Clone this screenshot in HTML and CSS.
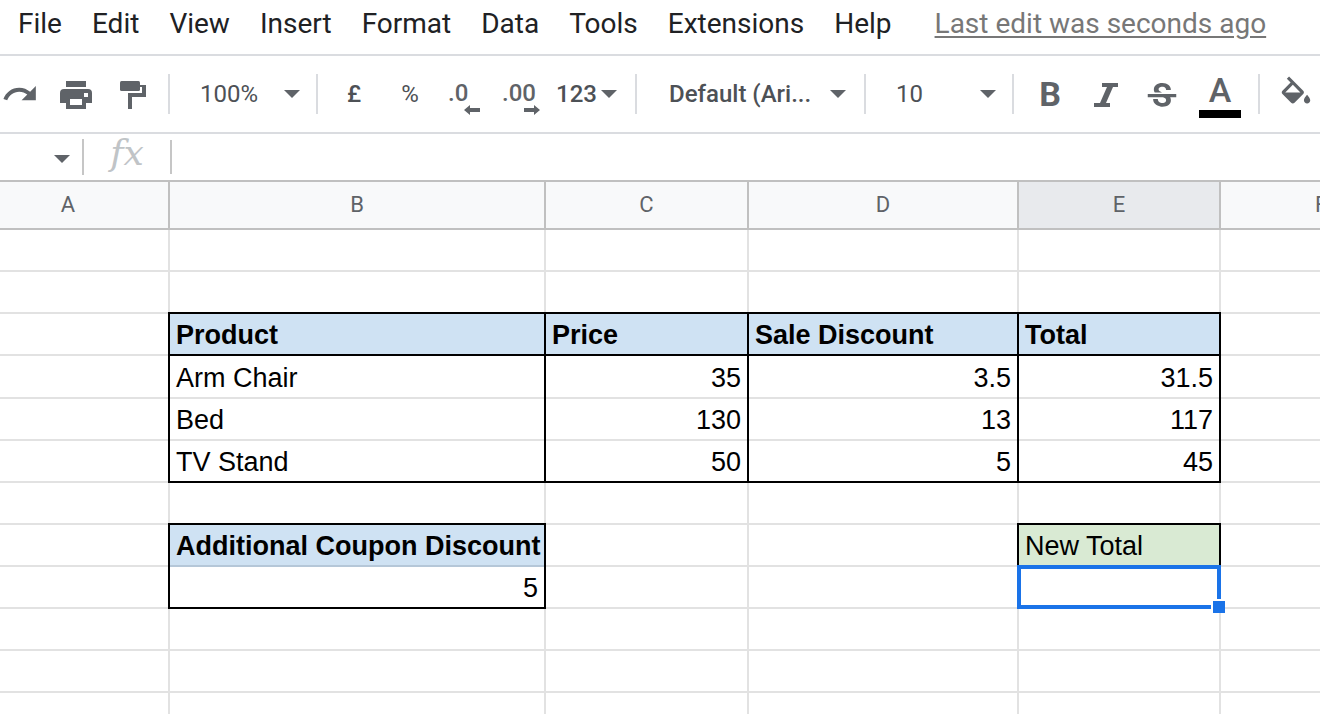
FILE: index.html
```html
<!DOCTYPE html>
<html lang="en">
  <head>
    <meta charset="UTF-8" />
    <meta name="viewport" content="width=device-width, initial-scale=1.0" />
    <title>Spreadsheet</title>
    <link rel="stylesheet" href="styles.css">
  </head>
  <body>
    <nav class="menu-bar">
      <button type="button">File</button>
      <button type="button">Edit</button>
      <button type="button">View</button>
      <button type="button">Insert</button>
      <button type="button">Format</button>
      <button type="button">Data</button>
      <button type="button">Tools</button>
      <button type="button">Extensions</button>
      <button type="button">Help</button>
      <a href="#" class="last-edit">Last edit was seconds ago</a>
    </nav>

    <div class="toolbar">
      <button type="button" class="tool" aria-label="Redo">
        <svg class="icon" viewBox="0 0 24 24"><path d="M18.4 10.6C16.55 8.99 14.15 8 11.5 8c-4.65 0-8.58 3.03-9.96 7.22L3.9 16c1.05-3.19 4.05-5.5 7.6-5.5 1.95 0 3.73.72 5.12 1.88L13 16h9V7l-3.6 3.6z" /></svg>
      </button>
      <button type="button" class="tool" aria-label="Print">
        <svg class="icon-lg" viewBox="0 0 36 36"><path fill-rule="evenodd" d="M8 5h20v6H8zM6 13h24a4 4 0 0 1 4 4v10h-6v6H8v-6H2V17a4 4 0 0 1 4-4zM12 23v6h12v-6zM26 17v4h4v-4z" /></svg>
      </button>
      <button type="button" class="tool" aria-label="Paint format">
        <svg class="icon-lg" viewBox="0 0 36 36"><rect x="6" y="5" width="20" height="10" rx="1.5" /><path d="M26 9h6v12H18v12h-4V17h14v-6h-2z" /></svg>
      </button>
      <span class="divider"></span>

      <label class="dropdown">
        <select aria-label="Zoom"><option>100%</option></select>
        <svg class="caret" viewBox="0 0 16 8"><path d="M0 0h16L8 8z" /></svg>
      </label>
      <span class="divider"></span>

      <button type="button" class="tool medium" aria-label="Format as currency">£</button>
      <button type="button" class="tool" aria-label="Format as percent">%</button>
      <button type="button" class="tool decimal decrease" aria-label="Decrease decimal places">
        <span>.0</span>
        <svg class="arrow" viewBox="0 0 16 10"><path d="M6 0v3h10v4H6v3L0 5z" /></svg>
      </button>
      <button type="button" class="tool decimal" aria-label="Increase decimal places">
        <span>.00</span>
        <svg class="arrow" viewBox="0 0 16 10"><path d="M10 0v3H0v4h10v3l6-5z" /></svg>
      </button>
      <button type="button" class="tool formats">
        <span>123</span>
        <svg class="caret" viewBox="0 0 16 8"><path d="M0 0h16L8 8z" /></svg>
      </button>
      <span class="divider"></span>

      <label class="dropdown font-name">
        <select aria-label="Font"><option>Default (Ari...</option></select>
        <svg class="caret" viewBox="0 0 16 8"><path d="M0 0h16L8 8z" /></svg>
      </label>
      <span class="divider"></span>

      <label class="dropdown">
        <select aria-label="Font size"><option>10</option></select>
        <svg class="caret" viewBox="0 0 16 8"><path d="M0 0h16L8 8z" /></svg>
      </label>
      <span class="divider"></span>

      <button type="button" class="tool bold" aria-label="Bold">B</button>
      <button type="button" class="tool" aria-label="Italic">
        <svg class="icon-lg" viewBox="0 0 36 36"><path d="M14 7h16v4h-5l-7 16h4v4H6v-4h6l7-16h-5z" /></svg>
      </button>
      <button type="button" class="tool" aria-label="Strikethrough">
        <svg class="icon" viewBox="0 -2 24 24"><path d="M7.24 8.75c-.26-.48-.39-1.03-.39-1.67 0-.61.13-1.16.4-1.67.26-.5.63-.93 1.11-1.29.48-.35 1.05-.63 1.7-.83.66-.19 1.39-.29 2.18-.29.81 0 1.54.11 2.21.34.66.22 1.23.54 1.69.94.47.4.83.88 1.08 1.43.25.55.38 1.15.38 1.81h-3.01c0-.31-.05-.59-.15-.85-.09-.27-.24-.49-.44-.68-.2-.19-.45-.33-.75-.44-.3-.1-.66-.16-1.06-.16-.39 0-.74.04-1.03.13-.29.09-.53.21-.72.36-.19.16-.34.34-.44.55-.1.21-.15.43-.15.66 0 .48.25.88.74 1.21.38.25.77.48 1.41.7H7.39c-.05-.08-.11-.17-.15-.25zM21 12v-2H3v2h9.62c.18.07.4.14.55.2.37.17.66.34.87.51.21.17.35.36.43.57.07.2.11.43.11.69 0 .23-.05.45-.14.66-.09.2-.23.38-.42.53-.19.15-.42.26-.71.35-.29.08-.63.13-1.01.13-.43 0-.83-.04-1.18-.13s-.66-.23-.91-.42c-.25-.19-.45-.44-.59-.75-.14-.31-.25-.76-.25-1.21H6.4c0 .55.08 1.13.24 1.58.16.45.37.85.65 1.21.28.35.6.66.98.92.37.26.78.48 1.22.65.44.17.9.3 1.38.39.48.08.96.13 1.44.13.8 0 1.53-.09 2.18-.28s1.21-.45 1.67-.79c.46-.34.82-.77 1.07-1.27s.38-1.07.38-1.71c0-.6-.1-1.14-.31-1.61-.05-.11-.11-.23-.17-.33H21z" /></svg>
      </button>
      <button type="button" class="tool text-color" aria-label="Text color">
        <span>A</span>
        <i class="swatch"></i>
      </button>
      <span class="divider"></span>
      <button type="button" class="tool" aria-label="Fill color">
        <svg class="icon" viewBox="0 -1 24 24"><path d="M16.56 8.94L7.62 0 6.21 1.41l2.38 2.38-5.15 5.15c-.59.59-.59 1.54 0 2.12l5.5 5.5c.29.29.68.44 1.06.44s.77-.15 1.06-.44l5.5-5.5c.59-.58.59-1.53 0-2.12zM5.21 10L10 5.21 14.79 10H5.21zM19 11.5s-2 2.17-2 3.5c0 1.1.9 2 2 2s2-.9 2-2c0-1.33-2-3.5-2-3.5z" /></svg>
      </button>
    </div>

    <div class="formula-bar">
      <button type="button" class="name-box" aria-label="Named ranges">
        <svg class="caret" viewBox="0 0 16 8"><path d="M0 0h16L8 8z" /></svg>
      </button>
      <label class="fx" for="formula">fx</label>
      <input type="text" id="formula" class="formula" />
    </div>

    <main class="sheet">
      <table>
        <colgroup>
          <col class="col-a" />
          <col class="col-b" />
          <col class="col-c" />
          <col class="col-d" />
          <col class="col-e" />
          <col class="col-f" />
          <col />
        </colgroup>
        <thead>
          <tr>
            <th class="scrolled">A</th>
            <th>B</th>
            <th>C</th>
            <th>D</th>
            <th class="active">E</th>
            <th>F</th>
            <th></th>
          </tr>
        </thead>
        <tbody>
          <tr><td></td><td></td><td></td><td></td><td></td><td></td><td></td></tr>
          <tr><td></td><td></td><td></td><td></td><td></td><td></td><td></td></tr>
          <tr>
            <td></td>
            <td class="box top head">Product</td>
            <td class="box top head">Price</td>
            <td class="box top head">Sale Discount</td>
            <td class="box top head">Total</td>
            <td></td>
            <td></td>
          </tr>
          <tr class="tall">
            <td></td>
            <td class="box top">Arm Chair</td>
            <td class="box top number">35</td>
            <td class="box top number">3.5</td>
            <td class="box top number">31.5</td>
            <td></td>
            <td></td>
          </tr>
          <tr>
            <td></td>
            <td class="box">Bed</td>
            <td class="box number">130</td>
            <td class="box number">13</td>
            <td class="box number">117</td>
            <td></td>
            <td></td>
          </tr>
          <tr>
            <td></td>
            <td class="box bottom">TV Stand</td>
            <td class="box bottom number">50</td>
            <td class="box bottom number">5</td>
            <td class="box bottom number">45</td>
            <td></td>
            <td></td>
          </tr>
          <tr><td></td><td></td><td></td><td></td><td></td><td></td><td></td></tr>
          <tr>
            <td></td>
            <td class="box top head">Additional Coupon Discount</td>
            <td></td>
            <td></td>
            <td class="box top new-total">New Total</td>
            <td></td>
            <td></td>
          </tr>
          <tr>
            <td></td>
            <td class="box bottom number">5</td>
            <td></td>
            <td></td>
            <td class="selected"><span class="handle"></span></td>
            <td></td>
            <td></td>
          </tr>
          <tr><td></td><td></td><td></td><td></td><td></td><td></td><td></td></tr>
          <tr><td></td><td></td><td></td><td></td><td></td><td></td><td></td></tr>
          <tr><td></td><td></td><td></td><td></td><td></td><td></td><td></td></tr>
        </tbody>
      </table>
    </main>
  </body>
</html>
```

FILE: styles.css
```css
* {
  margin: 0;
  padding: 0;
  box-sizing: border-box;
}

body {
  font-family: Roboto, Arial, sans-serif;
  background: #ffffff;
  color: #202124;
  height: 100vh;
  display: flex;
  flex-direction: column;
  overflow: hidden;
}

button,
select,
input {
  font: inherit;
  color: inherit;
  background: none;
  border: none;
  outline: none;
}

button,
select {
  cursor: pointer;
}

svg {
  display: block;
  fill: #5f6368;
  flex-shrink: 0;
}

/* Menu */
.menu-bar {
  display: flex;
  align-items: center;
  flex-shrink: 0;
  height: 56px;
  padding: 0 3px 8px;
  font-size: 28px;
  white-space: nowrap;
  border-bottom: 2px solid #dadce0;
}

.menu-bar button {
  padding: 0 15px;
}

.last-edit {
  margin-left: 28px;
  color: #777777;
  text-underline-offset: 3px;
}

/* Toolbar */
.toolbar {
  display: flex;
  align-items: center;
  flex-shrink: 0;
  height: 78px;
  margin-left: -8px;
  font-size: 24px;
  color: #4d5156;
  border-bottom: 2px solid #dadce0;
}

.tool {
  display: flex;
  align-items: center;
  justify-content: center;
  flex-shrink: 0;
  width: 56px;
  height: 60px;
}

.icon {
  width: 38px;
  height: 38px;
}

.icon-lg {
  width: 36px;
  height: 36px;
}

.caret {
  width: 16px;
  height: 8px;
}

.divider {
  flex-shrink: 0;
  width: 2px;
  height: 40px;
  margin: 0 8px;
  background: #dadce0;
}

.dropdown {
  display: flex;
  align-items: center;
  flex-shrink: 0;
  width: 130px;
  padding: 0 8px 0 22px;
}

.dropdown select {
  flex: 1;
  min-width: 0;
  appearance: none;
}

.font-name {
  width: 211px;
  padding: 0 10px 0 24px;
  font-weight: 500;
}

.medium {
  font-weight: 500;
}

.decimal {
  flex-direction: column;
  align-items: flex-start;
  padding: 8px 10px 0 8px;
  color: #5f6368;
  font-weight: 500;
  line-height: 24px;
}

.decrease {
  padding: 8px 14px 0 10px;
}

.arrow {
  width: 16px;
  height: 10px;
  align-self: flex-end;
}

.formats {
  width: 77px;
  gap: 4px;
  padding-right: 4px;
  font-weight: 500;
}

.bold {
  color: #5f6368;
  font-size: 34px;
  font-weight: 700;
}

.text-color {
  flex-direction: column;
  width: 60px;
  color: #5f6368;
  font-size: 34px;
  font-weight: 500;
  line-height: 40px;
}

.swatch {
  width: 42px;
  height: 8px;
  background: #000000;
}

/* Formula bar */
.formula-bar {
  display: flex;
  align-items: center;
  flex-shrink: 0;
  height: 48px;
  border-bottom: 2px solid #c0c0c0;
}

.name-box {
  display: flex;
  align-items: center;
  justify-content: flex-end;
  width: 84px;
  height: 36px;
  padding: 4px 12px 0 0;
  border-right: 2px solid #c6c6c6;
}

.fx {
  width: 88px;
  height: 34px;
  color: #c0c4c7;
  font-family: "DejaVu Serif", serif;
  font-size: 36px;
  font-style: italic;
  line-height: 26px;
  text-align: center;
  border-right: 2px solid #c6c6c6;
}

.formula {
  flex: 1;
  height: 44px;
  padding: 0 12px;
  font-size: 26px;
}

/* Grid */
.sheet {
  flex: 1;
  min-height: 0;
  overflow: hidden;
}

table {
  width: max(100%, 1500px);
  table-layout: fixed;
  border-collapse: separate;
  border-spacing: 0;
  color: #000000;
  font-family: "Liberation Sans", Arial, sans-serif;
  font-size: 27px;
}

.col-a {
  width: 170px;
}

.col-b {
  width: 376px;
}

.col-c {
  width: 203px;
}

.col-d {
  width: 270px;
}

.col-e,
.col-f {
  width: 202px;
}

th {
  height: 48px;
  padding-bottom: 2px;
  background: #f8f9fa;
  color: #5f6368;
  font-family: Roboto, Arial, sans-serif;
  font-size: 22px;
  font-weight: 400;
  border-right: 2px solid #c0c0c0;
  border-bottom: 2px solid #c0c0c0;
}

th.active {
  background: #e8eaed;
}

th.scrolled {
  padding-right: 32px;
}

td {
  --line: #e2e2e2;
  --edge: 0 0 0 transparent;
  height: 42px;
  padding: 0 6px;
  line-height: 32px;
  white-space: nowrap;
  border-right: 2px solid #e2e2e2;
  box-shadow: var(--edge), inset 0 -2px 0 var(--line);
}

.tall td {
  height: 43px;
}

/* Black frame: the left and top edges are drawn over the neighbouring cells */
.box {
  --edge: -2px 0 0 #000000;
  border-right-color: #000000;
}

.box.top {
  --edge: -2px 0 0 #000000, 0 -2px 0 #000000, -2px -2px 0 #000000;
}

.box.bottom {
  --line: #000000;
}

.head {
  --line: #b5c7d8;
  background: #cfe2f3;
  font-weight: 700;
}

.new-total {
  background: #d9ead3;
}

.number {
  text-align: right;
}

.selected {
  position: relative;
}

.selected::before {
  content: "";
  position: absolute;
  inset: -2px -2px 0;
  border: 4px solid #1a73e8;
}

.handle {
  position: absolute;
  right: -6px;
  bottom: -4px;
  width: 12px;
  height: 12px;
  background: #1a73e8;
  box-shadow: -2px -2px 0 #ffffff;
}
```
